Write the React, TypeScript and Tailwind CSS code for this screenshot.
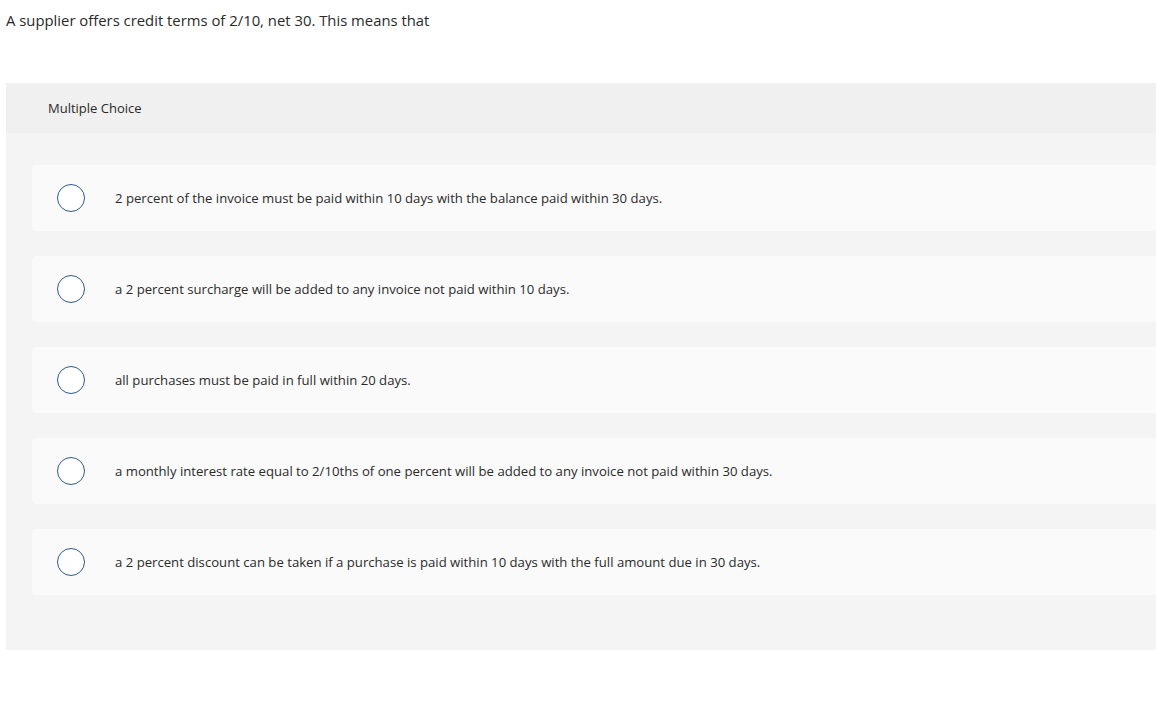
export default function App() {
  const options = [
    "2 percent of the invoice must be paid within 10 days with the balance paid within 30 days.",
    "a 2 percent surcharge will be added to any invoice not paid within 10 days.",
    "all purchases must be paid in full within 20 days.",
    "a monthly interest rate equal to 2/10ths of one percent will be added to any invoice not paid within 30 days.",
    "a 2 percent discount can be taken if a purchase is paid within 10 days with the full amount due in 30 days.",
  ];

  return (
    <div className="min-h-[728px] w-[1156px] overflow-hidden bg-white font-['Open_Sans',sans-serif] text-[#2a2a2a]">
      <p className="pl-[6px] pt-[10px] text-[14.85px] leading-[20px]">
        A supplier offers credit terms of 2/10, net 30. This means that
      </p>

      <div className="ml-[6px] mt-[53px] bg-[#f4f4f4]">
        <div className="flex h-[50px] items-center bg-[#f0f0f0] pl-[42px] pt-[2px] text-[13px]">Multiple Choice</div>
        <div className="flex flex-col gap-[25px] pb-[55px] pl-[26px] pt-[32px]">
          {options.map((text) => (
            <div key={text} className="flex h-[66px] items-center rounded-l-[4px] bg-[#fafafa]">
              <span className="ml-[25px] h-[28px] w-[28px] shrink-0 rounded-full border-[1.5px] border-[#2c5a8a] bg-white" />
              <span className="ml-[30px] pt-[2px] text-[13.15px]">{text}</span>
            </div>
          ))}
        </div>
      </div>
    </div>
  );
}
